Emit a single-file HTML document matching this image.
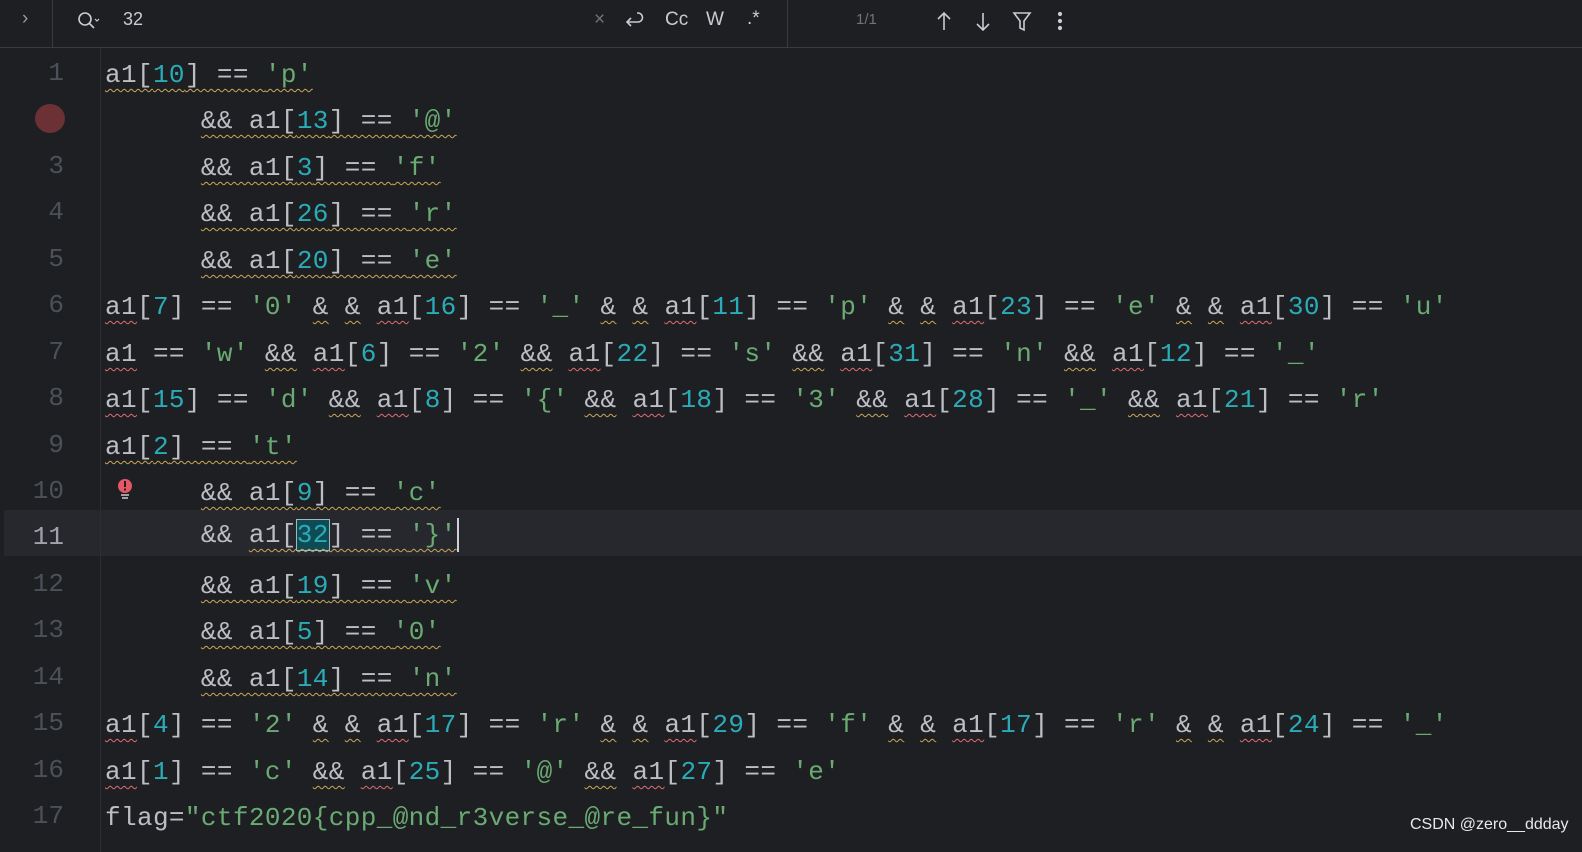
<!DOCTYPE html>
<html><head><meta charset="utf-8"><style>
body{margin:0;width:1582px;height:852px;background:#1e1f22;overflow:hidden;position:relative;font-family:"Liberation Sans",sans-serif}
.top{position:absolute;left:0;top:0;width:1582px;height:47px;border-bottom:1px solid #393b40;background:#1e1f22}
.vs{position:absolute;top:0;height:47px;width:1px;background:#393b40}
.t{position:absolute;color:#c9ccd2;font-size:19px}
.gut{position:absolute;left:100px;top:48px;width:1px;height:804px;background:#2b2d30}
.cur{position:absolute;left:4px;top:510px;width:1578px;height:46px;background:#26282e}
.ln{position:absolute;left:0;width:64px;text-align:right;font:26px "Liberation Mono",monospace;color:#4b5059;line-height:46px}
.code{position:absolute;left:105px;font:26px "Liberation Mono",monospace;letter-spacing:0.38px;color:#bcbec4;line-height:46px;white-space:pre}
.n{color:#2aacb8}.s{color:#6aab73}
.u{text-decoration:underline wavy #c9a85a;text-decoration-thickness:1px;text-underline-offset:6px}
.r{text-decoration:underline wavy #e06c75;text-decoration-thickness:1px;text-underline-offset:6px}
</style></head><body>
<div class="top">
<div class="vs" style="left:52px"></div><div class="vs" style="left:787px"></div>
<div class="t" style="left:22px;top:8px;color:#999">›</div>
<svg style="position:absolute;left:76px;top:10px" width="26" height="22" viewBox="0 0 26 22" fill="none" stroke="#c9ccd2" stroke-width="1.6"><circle cx="9" cy="9" r="6"/><path d="M13 13l5 5"/><path d="M19 9l2 2 2-2" stroke-width="1.2"/></svg>
<div class="t" style="left:123px;top:9px;font-size:18px">32</div>
<div class="t" style="left:594px;top:9px;color:#6f737a">×</div>
<svg style="position:absolute;left:622px;top:10px" width="22" height="22" viewBox="0 0 22 22" fill="none" stroke="#c9ccd2" stroke-width="1.6"><path d="M15 3h1a4 4 0 0 1 0 9H5"/><path d="M9 8l-4 4 4 4"/></svg>
<div class="t" style="left:665px;top:9px">Cc</div>
<div class="t" style="left:706px;top:9px">W</div>
<div class="t" style="left:747px;top:8px">.*</div>
<div class="t" style="left:856px;top:11px;font-size:15px;color:#6f737a">1/1</div>
<svg style="position:absolute;left:934px;top:10px" width="140" height="24" viewBox="0 0 140 24" fill="none" stroke="#c9ccd2" stroke-width="1.6"><path d="M10 20V3M4 9l6-6 6 6"/><path d="M49 3v17M43 14l6 6 6-6"/><path d="M80 3h16l-6 8v9l-4-2v-7z"/><circle cx="126" cy="4" r="1.3" fill="#c9ccd2"/><circle cx="126" cy="11" r="1.3" fill="#c9ccd2"/><circle cx="126" cy="18" r="1.3" fill="#c9ccd2"/></svg>
</div>
<div class="cur"></div>
<div class="gut"></div>
<div style="position:absolute;left:35px;top:104px;width:30px;height:29px;border-radius:50%;background:#6b3135"></div>
<svg style="position:absolute;left:116px;top:477px" width="18" height="24" viewBox="0 0 18 24"><circle cx="9" cy="9" r="7" fill="#e55765"/><rect x="8" y="4" width="2" height="6" fill="#1e1f22"/><rect x="8" y="11.5" width="2" height="2" fill="#1e1f22"/><path d="M5 18h8M6 21h6" stroke="#c9ccd2" stroke-width="1.4"/></svg>
<div class="ln" style="top:50px">1</div>
<div class="ln" style="top:143px">3</div>
<div class="ln" style="top:189px">4</div>
<div class="ln" style="top:236px">5</div>
<div class="ln" style="top:282px">6</div>
<div class="ln" style="top:329px">7</div>
<div class="ln" style="top:375px">8</div>
<div class="ln" style="top:422px">9</div>
<div class="ln" style="top:468px">10</div>
<div class="ln" style="top:514px;color:#a1a3ab">11</div>
<div class="ln" style="top:561px">12</div>
<div class="ln" style="top:607px">13</div>
<div class="ln" style="top:654px">14</div>
<div class="ln" style="top:700px">15</div>
<div class="ln" style="top:747px">16</div>
<div class="ln" style="top:793px">17</div>
<div class="code" style="top:52px"><span class="u">a1[<span class="n">10</span>] == <span class="s">'p'</span></span></div>
<div class="code" style="top:98px">      <span class="u">&amp;&amp; a1[<span class="n">13</span>] == <span class="s">'@'</span></span></div>
<div class="code" style="top:145px">      <span class="u">&amp;&amp; a1[<span class="n">3</span>] == <span class="s">'f'</span></span></div>
<div class="code" style="top:191px">      <span class="u">&amp;&amp; a1[<span class="n">26</span>] == <span class="s">'r'</span></span></div>
<div class="code" style="top:238px">      <span class="u">&amp;&amp; a1[<span class="n">20</span>] == <span class="s">'e'</span></span></div>
<div class="code" style="top:284px"><span class="r">a1</span>[<span class="n">7</span>] == <span class="s">'0'</span> <span class="u">&amp;</span> <span class="u">&amp;</span> <span class="r">a1</span>[<span class="n">16</span>] == <span class="s">'_'</span> <span class="u">&amp;</span> <span class="u">&amp;</span> <span class="r">a1</span>[<span class="n">11</span>] == <span class="s">'p'</span> <span class="u">&amp;</span> <span class="u">&amp;</span> <span class="r">a1</span>[<span class="n">23</span>] == <span class="s">'e'</span> <span class="u">&amp;</span> <span class="u">&amp;</span> <span class="r">a1</span>[<span class="n">30</span>] == <span class="s">'u'</span></div>
<div class="code" style="top:331px"><span class="r">a1</span> == <span class="s">'w'</span> <span class="u">&amp;&amp;</span> <span class="r">a1</span>[<span class="n">6</span>] == <span class="s">'2'</span> <span class="u">&amp;&amp;</span> <span class="r">a1</span>[<span class="n">22</span>] == <span class="s">'s'</span> <span class="u">&amp;&amp;</span> <span class="r">a1</span>[<span class="n">31</span>] == <span class="s">'n'</span> <span class="u">&amp;&amp;</span> <span class="r">a1</span>[<span class="n">12</span>] == <span class="s">'_'</span></div>
<div class="code" style="top:377px"><span class="r">a1</span>[<span class="n">15</span>] == <span class="s">'d'</span> <span class="u">&amp;&amp;</span> <span class="r">a1</span>[<span class="n">8</span>] == <span class="s">'{'</span> <span class="u">&amp;&amp;</span> <span class="r">a1</span>[<span class="n">18</span>] == <span class="s">'3'</span> <span class="u">&amp;&amp;</span> <span class="r">a1</span>[<span class="n">28</span>] == <span class="s">'_'</span> <span class="u">&amp;&amp;</span> <span class="r">a1</span>[<span class="n">21</span>] == <span class="s">'r'</span></div>
<div class="code" style="top:424px"><span class="u">a1[<span class="n">2</span>] == <span class="s">'t'</span></span></div>
<div class="code" style="top:470px">      <span class="u">&amp;&amp; a1[<span class="n">9</span>] == <span class="s">'c'</span></span></div>
<div class="code" style="top:512px">      &amp;&amp; <span class="u">a1[<span class="n" style="background:#0f4b55;outline:1px solid #9fb8c0">32</span>] == <span class="s">'}'</span></span><span style="display:inline-block;width:2px;height:34px;background:#ced0d6;vertical-align:middle"></span></div>
<div class="code" style="top:563px">      <span class="u">&amp;&amp; a1[<span class="n">19</span>] == <span class="s">'v'</span></span></div>
<div class="code" style="top:609px">      <span class="u">&amp;&amp; a1[<span class="n">5</span>] == <span class="s">'0'</span></span></div>
<div class="code" style="top:656px">      <span class="u">&amp;&amp; a1[<span class="n">14</span>] == <span class="s">'n'</span></span></div>
<div class="code" style="top:702px"><span class="r">a1</span>[<span class="n">4</span>] == <span class="s">'2'</span> <span class="u">&amp;</span> <span class="u">&amp;</span> <span class="r">a1</span>[<span class="n">17</span>] == <span class="s">'r'</span> <span class="u">&amp;</span> <span class="u">&amp;</span> <span class="r">a1</span>[<span class="n">29</span>] == <span class="s">'f'</span> <span class="u">&amp;</span> <span class="u">&amp;</span> <span class="r">a1</span>[<span class="n">17</span>] == <span class="s">'r'</span> <span class="u">&amp;</span> <span class="u">&amp;</span> <span class="r">a1</span>[<span class="n">24</span>] == <span class="s">'_'</span></div>
<div class="code" style="top:749px"><span class="r">a1</span>[<span class="n">1</span>] == <span class="s">'c'</span> <span class="u">&amp;&amp;</span> <span class="r">a1</span>[<span class="n">25</span>] == <span class="s">'@'</span> <span class="u">&amp;&amp;</span> <span class="r">a1</span>[<span class="n">27</span>] == <span class="s">'e'</span></div>
<div class="code" style="top:795px">flag=<span class="s">"ctf2020{cpp_@nd_r3verse_@re_fun}"</span></div>
<div style="position:absolute;left:1410px;top:816px;color:#e8e8e8;font-size:16px">CSDN @zero__ddday</div>
</body></html>
